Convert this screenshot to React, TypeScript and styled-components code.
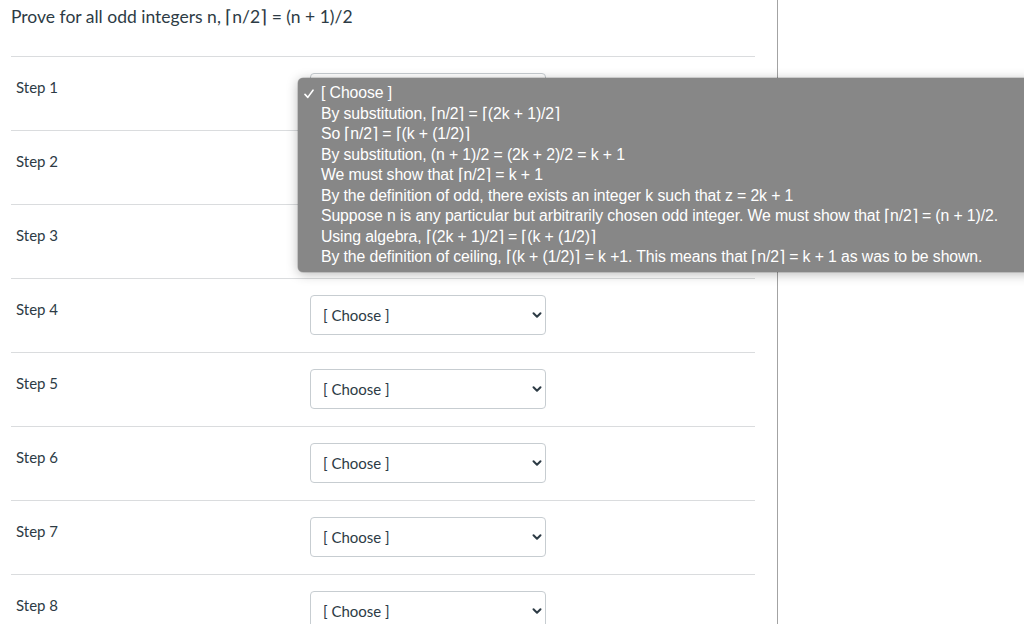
import styled, { createGlobalStyle } from "styled-components";

const steps = [1, 2, 3, 4, 5, 6, 7, 8];

const options = [
  "By substitution, ⌈n/2⌉ = ⌈(2k + 1)/2⌉",
  "So ⌈n/2⌉ = ⌈(k + (1/2)⌉",
  "By substitution, (n + 1)/2 = (2k + 2)/2 = k + 1",
  "We must show that ⌈n/2⌉ = k + 1",
  "By the definition of odd, there exists an integer k such that z = 2k + 1",
  "Suppose n is any particular but arbitrarily chosen odd integer. We must show that ⌈n/2⌉ = (n + 1)/2.",
  "Using algebra, ⌈(2k + 1)/2⌉ = ⌈(k + (1/2)⌉",
  "By the definition of ceiling, ⌈(k + (1/2)⌉ = k +1. This means that ⌈n/2⌉ = k + 1 as was to be shown.",
];

const Chevron = () => (
  <svg width="12" height="12" viewBox="0 0 12 12">
    <path
      d="M2.5 4.2 L6 7.7 L9.5 4.2"
      fill="none"
      stroke="#2d3b45"
      strokeWidth="2"
      strokeLinecap="round"
      strokeLinejoin="round"
    />
  </svg>
);

const Check = () => (
  <svg width="10" height="10" viewBox="0 0 10 10">
    <path
      d="M1 5.4 L3.8 8.4 L9 1.2"
      fill="none"
      stroke="#ffffff"
      strokeWidth="1.6"
      strokeLinecap="round"
      strokeLinejoin="round"
    />
  </svg>
);

const App = () => {
  return (
    <>
      <GlobalStyle />
      <Page>
        <Main>
          <Title>Prove for all odd integers n, ⌈n/2⌉ = (n + 1)/2</Title>
          <StepList>
            {steps.map((step) => (
              <StepRow key={step}>
                <StepLabel>Step {step}</StepLabel>
                <SelectWrap>
                  <Select defaultValue="">
                    <option value="">[ Choose ]</option>
                    {options.map((o) => (
                      <option key={o}>{o}</option>
                    ))}
                  </Select>
                  <ChevronBox>
                    <Chevron />
                  </ChevronBox>
                  {step === 1 && (
                    <Menu>
                      <MenuItem>
                        <CheckMark>
                          <Check />
                        </CheckMark>
                        [ Choose ]
                      </MenuItem>
                      {options.map((o) => (
                        <MenuItem key={o}>{o}</MenuItem>
                      ))}
                    </Menu>
                  )}
                </SelectWrap>
              </StepRow>
            ))}
          </StepList>
        </Main>
        <Aside />
      </Page>
    </>
  );
};

export default App;

const GlobalStyle = createGlobalStyle`
  html, body {
    margin: 0;
    padding: 0;
    overflow: hidden;
    background: #ffffff;
  }
  body {
    font-family: Lato, "Liberation Sans", sans-serif;
    color: #2d3b45;
  }
`;

const Page = styled.div`
  display: flex;
  width: 1024px;
  height: 624px;
  overflow: hidden;
`;

const Main = styled.main`
  width: 744px;
  padding: 0 22px 0 11px;
  flex-shrink: 0;
`;

const Aside = styled.aside`
  flex: 1;
  border-left: 1px solid #a3a3a3;
`;

const Title = styled.h1`
  margin: 0;
  padding: 5px 0 0;
  height: 51px;
  box-sizing: content-box;
  font-size: 17.5px;
  font-weight: 400;
  line-height: 24px;
  border-bottom: 1px solid #dadcde;
`;

const StepList = styled.div`
  display: flex;
  flex-direction: column;
`;

const StepRow = styled.div`
  display: flex;
  align-items: flex-start;
  height: 74px;
  padding-top: 16px;
  box-sizing: border-box;
  border-bottom: 1px solid #dadcde;
`;

const StepLabel = styled.div`
  width: 294px;
  padding: 4px 0 0 5px;
  font-size: 15px;
  line-height: 20px;
`;

const SelectWrap = styled.div`
  position: relative;
  width: 236px;
  height: 40px;
`;

const Select = styled.select`
  appearance: none;
  -webkit-appearance: none;
  width: 100%;
  height: 100%;
  box-sizing: border-box;
  padding: 0 30px 0 12px;
  border: 1px solid #c7cdd1;
  border-radius: 4px;
  background: #ffffff;
  font-family: Lato, "Liberation Sans", sans-serif;
  font-size: 15px;
  color: #2d3b45;
  outline: none;
`;

const ChevronBox = styled.span`
  position: absolute;
  right: 3px;
  top: 14px;
  pointer-events: none;
  display: flex;
`;

const Menu = styled.ul`
  position: absolute;
  left: -12px;
  top: 5px;
  z-index: 10;
  margin: 0;
  padding: 5px 0 4px;
  list-style: none;
  white-space: nowrap;
  width: 740px;
  background: #878787;
  border-radius: 5px;
  box-shadow: 0 2px 12px rgba(0, 0, 0, 0.28), 0 0 0 0.5px rgba(0, 0, 0, 0.25);
`;

const MenuItem = styled.li`
  position: relative;
  padding-left: 23px;
  font-family: "Liberation Sans", Arial, sans-serif;
  font-size: 15.8px;
  line-height: 20.5px;
  color: #ffffff;
  letter-spacing: -0.1px;
`;

const CheckMark = styled.span`
  position: absolute;
  left: 6px;
  top: 6px;
  display: flex;
`;
